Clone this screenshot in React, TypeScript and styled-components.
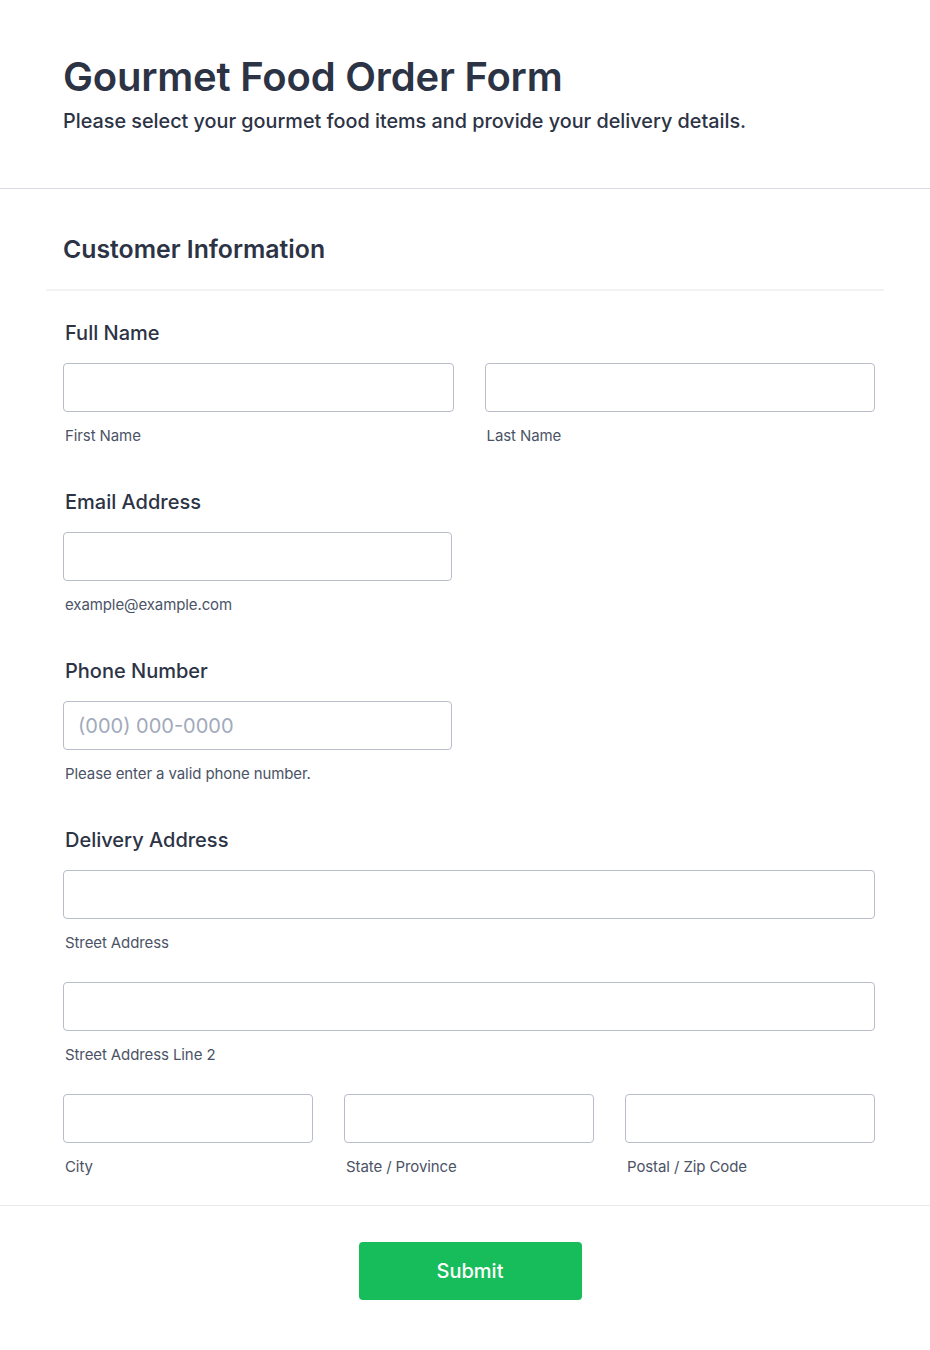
import React from "react";
import styled, { createGlobalStyle } from "styled-components";

const GlobalStyle = createGlobalStyle`
  html, body {
    margin: 0;
    padding: 0;
    background: #ffffff;
  }
  body {
    font-family: Inter, "Noto Sans", "Liberation Sans", sans-serif;
    color: #2c3345;
  }
  * {
    box-sizing: border-box;
  }
`;

type Sub = { name: string; sub: string; placeholder?: string };

function App() {
  return (
    <>
      <GlobalStyle />
      <Page>
        <Header>
          <Title>Gourmet Food Order Form</Title>
          <Subtitle>
            Please select your gourmet food items and provide your delivery details.
          </Subtitle>
        </Header>

        <Section>
          <SectionHead>
            <SectionTitle>Customer Information</SectionTitle>
          </SectionHead>

          <Fields>
            <FieldRow label="Full Name" cols={2} items={[
              { name: "first", sub: "First Name" },
              { name: "last", sub: "Last Name" },
            ]} />
            <FieldRow label="Email Address" narrow items={[
              { name: "email", sub: "example@example.com" },
            ]} />
            <FieldRow label="Phone Number" narrow items={[
              { name: "phone", sub: "Please enter a valid phone number.", placeholder: "(000) 000-0000" },
            ]} />

            <Field>
              <Label>Delivery Address</Label>
              <Stack>
                <Grid $cols={1}>
                  <SubInput item={{ name: "street", sub: "Street Address" }} />
                </Grid>
                <Grid $cols={1}>
                  <SubInput item={{ name: "street2", sub: "Street Address Line 2" }} />
                </Grid>
                <Grid $cols={3}>
                  <SubInput item={{ name: "city", sub: "City" }} />
                  <SubInput item={{ name: "state", sub: "State / Province" }} />
                  <SubInput item={{ name: "zip", sub: "Postal / Zip Code" }} />
                </Grid>
              </Stack>
            </Field>
          </Fields>
        </Section>

        <Footer>
          <Submit type="button">Submit</Submit>
        </Footer>
      </Page>
    </>
  );
}

function FieldRow({ label, items, cols = 1, narrow = false }: { label: string; items: Sub[]; cols?: number; narrow?: boolean }) {
  return (
    <Field>
      <Label>{label}</Label>
      <Grid $cols={cols} $narrow={narrow}>
        {items.map((it) => (
          <SubInput key={it.name} item={it} />
        ))}
      </Grid>
    </Field>
  );
}

function SubInput({ item }: { item: Sub }) {
  return (
    <InputWrap>
      <TextInput name={item.name} placeholder={item.placeholder} />
      <SubLabel>{item.sub}</SubLabel>
    </InputWrap>
  );
}

export default App;

const Page = styled.div`
  width: 930px;
  min-height: 1350px;
  background: #fff;
`;

const Header = styled.header`
  padding: 53px 63px 0;
  height: 189px;
  border-bottom: 1px solid #d8dbe2;
`;

const Title = styled.h1`
  margin: 0;
  font-size: 40px;
  line-height: 48px;
  font-weight: 600;
  color: #2c3345;
  letter-spacing: -0.2px;
`;

const Subtitle = styled.p`
  margin: 8px 0 0;
  font-size: 19.8px;
  line-height: 24px;
  font-weight: 500;
  color: #2c3345;
`;

const Section = styled.section`
  padding: 0 46px;
`;

const SectionHead = styled.div`
  padding: 45px 17px 0;
  height: 102px;
  border-bottom: 2px solid #f3f3f6;
`;

const SectionTitle = styled.h2`
  margin: 0;
  font-size: 24.8px;
  line-height: 30px;
  font-weight: 600;
  color: #2c3345;
`;

const Fields = styled.div`
  padding: 30px 9px 29px 17px;
  display: flex;
  flex-direction: column;
  gap: 45px;
`;

const Field = styled.div`
  display: flex;
  flex-direction: column;
`;

const Label = styled.label`
  padding-left: 2px;
  font-size: 20px;
  line-height: 24px;
  font-weight: 500;
  color: #2c3345;
  margin-bottom: 18px;
`;

const Stack = styled.div`
  display: flex;
  flex-direction: column;
  gap: 30px;
`;

const Grid = styled.div<{ $cols: number; $narrow?: boolean }>`
  display: grid;
  grid-template-columns: repeat(${({ $cols }) => $cols}, 1fr);
  column-gap: 31px;
  width: ${({ $narrow }) => ($narrow ? "389px" : "100%")};
`;

const InputWrap = styled.div`
  display: flex;
  flex-direction: column;
`;

const TextInput = styled.input`
  height: 49px;
  width: 100%;
  border: 1px solid #b8bdc9;
  border-radius: 4px;
  padding: 0 14px;
  font-family: inherit;
  font-size: 20px;
  color: #2c3345;
  background: #fff;
  outline: none;

  &::placeholder {
    color: #a1aabb;
  }
`;

const SubLabel = styled.span`
  margin-top: 15px;
  padding-left: 2px;
  font-size: 15px;
  line-height: 18px;
  color: #4b5366;
  letter-spacing: -0.1px;
`;

const Footer = styled.div`
  border-top: 1px solid #e9eaee;
  padding: 36px 0 0 10px;
  display: flex;
  justify-content: center;
`;

const Submit = styled.button`
  width: 223px;
  height: 58px;
  border: none;
  border-radius: 4px;
  background: #18bd5b;
  color: #fff;
  font-family: inherit;
  font-size: 20px;
  font-weight: 500;
  cursor: pointer;
`;
